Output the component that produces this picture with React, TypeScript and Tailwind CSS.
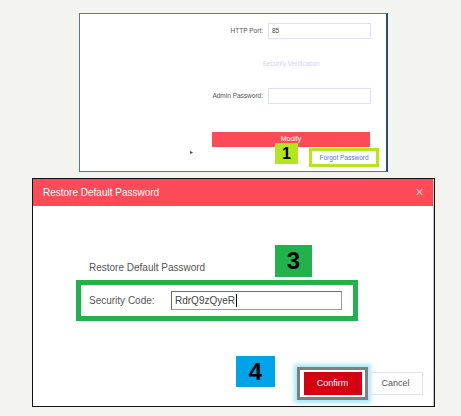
import React from "react";

const font = { fontFamily: '"Liberation Sans", Arial, sans-serif' };

const Badge = ({
  n,
  className,
}: {
  n: string;
  className: string;
}) => (
  <div
    className={
      "absolute flex items-center justify-center font-bold leading-none text-black " +
      className
    }
  >
    {n}
  </div>
);

const SettingsPanel = () => (
  <div className="ml-[79px] flex h-[159px] w-[309px] flex-col border border-[#4b78b8] border-r-2 border-r-[#2b4a7c] bg-white">
    <div className="mt-[9px] flex h-[16px] items-center">
      <span className="w-[184px] pr-[1px] text-right text-[6.5px] text-[#555]">HTTP Port:</span>
      <div className="ml-[4px] flex h-[16px] w-[103px] items-center border border-[#e2defa] pl-[3px] text-[6.5px] text-[#444]">
        85
      </div>
    </div>
    <div className="mt-[20px] flex h-[10px] pl-[132px]">
      <span className="w-[158px] text-center text-[6.5px] text-[#d6d2f7]">Security Verification</span>
    </div>
    <div className="mt-[19px] flex h-[16px] items-center">
      <span className="w-[184px] pr-[1px] text-right text-[6.5px] text-[#555]">Admin Password:</span>
      <div className="ml-[4px] h-[16px] w-[103px] border border-[#e2defa]" />
    </div>
    <div className="ml-[132px] mt-[28px] flex h-[15px] w-[158px] items-center justify-center bg-[#ff4a58] text-[7px] text-white">
      Modify
    </div>
    <div className="relative flex h-[20px]">
      <span className="absolute left-[110px] top-[2px] text-[6px] leading-none text-[#444]">▸</span>
      <div className="ml-[229px] mt-[1px] flex h-[19px] w-[70px] items-center justify-center border-[3px] border-[#b5e61d] bg-white text-[6.5px] text-[#5b72e0]">
        Forgot Password
      </div>
    </div>
  </div>
);

const RestoreDialog = () => (
  <div className="ml-[32px] mt-[6px] flex h-[229px] w-[403px] flex-col border border-[#111] bg-white">
    <div className="flex h-[27px] items-center justify-between border-r border-[#c4c4d4] bg-[#ff4a58] pl-[10px] pr-[9px]">
      <span className="text-[10px] text-white">Restore Default Password</span>
      <span className="text-[11px] leading-none text-[#ffc4c8]">✕</span>
    </div>
    <div className="flex flex-1 flex-col border-r border-[#c4c4d4]">
      <div className="ml-[56px] mt-[55px] h-[13px] text-[10px] leading-[13px] text-[#555]">
        Restore Default Password
      </div>
      <div className="ml-[43px] mt-[6px] flex h-[41px] w-[282px] items-center border-[5px] border-[#22b14c] pl-[8px]">
        <span className="w-[82px] text-[10px] text-[#555]">Security Code:</span>
        <div className="flex h-[19px] w-[171px] items-center border border-[#9a9a9a] border-l-[#6e6e6e] border-t-[#6e6e6e] pl-[3px] text-[10px] text-[#444]">
          RdrQ9zQyeR
          <span className="ml-[1px] h-[13px] w-[1px] bg-black" />
        </div>
      </div>
      <div className="mr-[10px] mt-[46px] flex items-center justify-end">
        <div className="flex h-[33px] w-[71px] items-center justify-center border-[3px] border-[#7f7f7f] shadow-[0_0_4px_3px_#a8e8fb]">
          <div className="flex h-[23px] w-[58px] items-center justify-center bg-[#d40012] text-[9px] text-white">
            Confirm
          </div>
        </div>
        <div className="flex h-[23px] w-[55px] items-center justify-center border border-[#e2e0f6] text-[9px] text-[#555]">
          Cancel
        </div>
      </div>
    </div>
  </div>
);

export default function App() {
  return (
    <div
      className="relative flex h-[416px] w-[461px] flex-col overflow-hidden bg-[#f3f3ef] pt-[13px]"
      style={font}
    >
      <SettingsPanel />
      <RestoreDialog />
      <Badge n="1" className="left-[275px] top-[143px] h-[21px] w-[23px] bg-[#b5e61d] text-[16px]" />
      <Badge n="3" className="left-[275px] top-[245px] h-[32px] w-[37px] bg-[#22b14c] text-[24px]" />
      <Badge n="4" className="left-[236px] top-[356px] h-[31px] w-[39px] bg-[#00a2e8] text-[24px]" />
    </div>
  );
}
